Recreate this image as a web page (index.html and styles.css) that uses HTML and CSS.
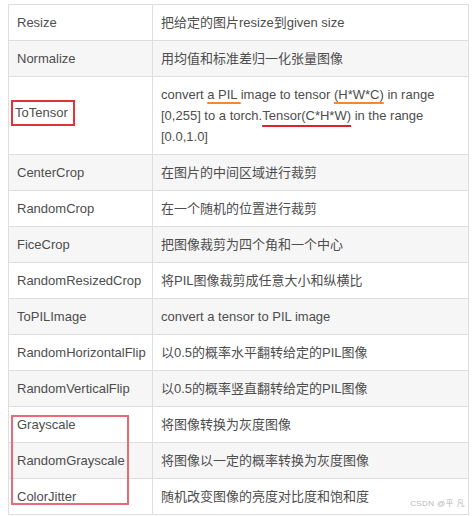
FILE: index.html
```html
<!DOCTYPE html>
<html lang="zh">
<head>
<meta charset="utf-8">
<title>transforms</title>
<link rel="stylesheet" href="styles.css">
</head>
<body>
<div class="page">
  <div class="wrap">
    <table class="tbl">
      <colgroup><col class="c1"><col class="c2"></colgroup>
      <tbody>
        <tr><td>Resize</td><td>把给定的图片resize到given size</td></tr>
        <tr><td>Normalize</td><td>用均值和标准差归一化张量图像</td></tr>
        <tr><td><span class="box">ToTensor</span></td><td>convert <span class="ul-orange">a PIL </span>image to tensor <span class="ul-orange">(H*W*C)</span> in range [0,255] to a torch.<span class="ul-red">Tensor(C*H*W)</span> in the range [0.0,1.0]</td></tr>
        <tr><td>CenterCrop</td><td>在图片的中间区域进行裁剪</td></tr>
        <tr><td>RandomCrop</td><td>在一个随机的位置进行裁剪</td></tr>
        <tr><td>FiceCrop</td><td>把图像裁剪为四个角和一个中心</td></tr>
        <tr><td>RandomResizedCrop</td><td>将PIL图像裁剪成任意大小和纵横比</td></tr>
        <tr><td>ToPILImage</td><td>convert a tensor to PIL image</td></tr>
        <tr><td>RandomHorizontalFlip</td><td>以0.5的概率水平翻转给定的PIL图像</td></tr>
        <tr><td>RandomVerticalFlip</td><td>以0.5的概率竖直翻转给定的PIL图像</td></tr>
        <tr><td>Grayscale</td><td>将图像转换为灰度图像</td></tr>
        <tr><td>RandomGrayscale</td><td>将图像以一定的概率转换为灰度图像</td></tr>
        <tr><td>ColorJitter</td><td>随机改变图像的亮度对比度和饱和度</td></tr>
      </tbody>
    </table>
    <div class="group-box"></div>
    <div class="watermark">CSDN @平 凡</div>
  </div>
</div>
</body>
</html>
```
FILE: styles.css
```css
html, body {
  margin: 0;
  padding: 0;
  background: #ffffff;
}

.page {
  padding: 4px 6px 0 8px;
  font-family: "Liberation Sans", "Noto Sans CJK SC", sans-serif;
  font-size: 13px;
  color: #4d4d4d;
}

.wrap {
  position: relative;
  width: 460px;
}

.tbl {
  width: 460px;
  border-collapse: collapse;
  table-layout: fixed;
}

.c1 { width: 144px; }
.c2 { width: 316px; }

.tbl td {
  border: 1px solid #dedede;
  padding: 7px 8px;
  line-height: 21px;
  vertical-align: middle;
  text-align: left;
}

.tbl tr:nth-child(even) td {
  background: #f6f6f6;
}

.tbl tr:nth-child(odd) td {
  background: #ffffff;
}

.box {
  display: inline-block;
  border: 2px solid #e53238;
  padding: 1px 5px 1px 2px;
  margin-left: -6px;
  line-height: 20px;
  position: relative;
  top: -3px;
}

.ul-orange {
  text-decoration: underline;
  text-decoration-color: #f08a2a;
  text-decoration-thickness: 2px;
  text-underline-offset: 3px;
}

.ul-red {
  text-decoration: underline;
  text-decoration-color: #e0202a;
  text-decoration-thickness: 2px;
  text-underline-offset: 5px;
}

.group-box {
  position: absolute;
  left: 3px;
  top: 411px;
  width: 114px;
  height: 86px;
  border: 2px solid #ec6a74;
}

.watermark {
  position: absolute;
  right: 3px;
  bottom: 6px;
  font-size: 8px;
  line-height: 10px;
  color: #b8b8b8;
  letter-spacing: 0.4px;
}
```
